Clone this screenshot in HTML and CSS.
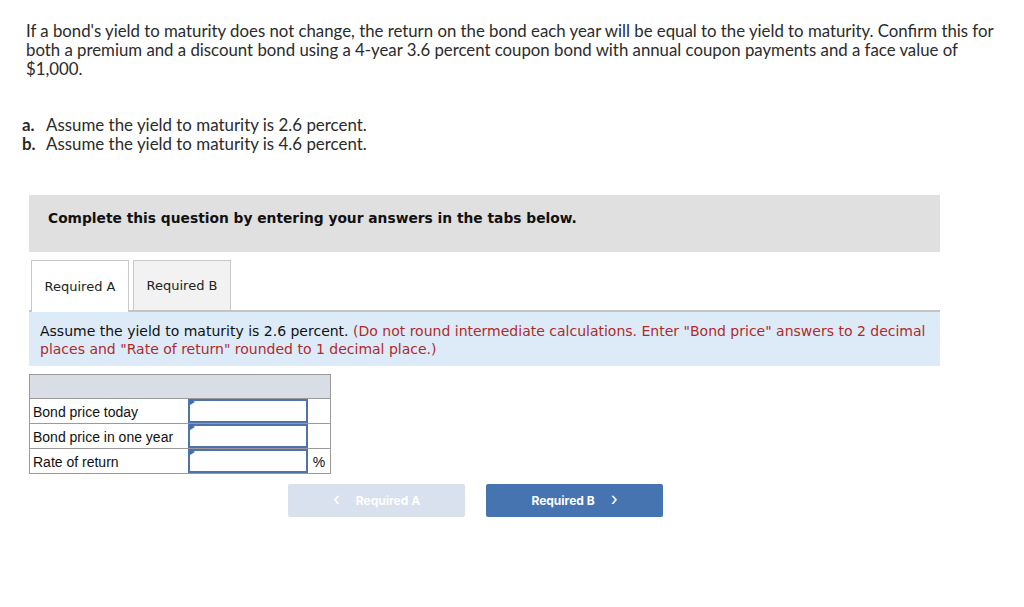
FILE: index.html
```html
<!DOCTYPE html>
<html>
<head>
<meta charset="utf-8">
<link rel="stylesheet" href="styles.css">
</head>
<body>
<div class="page">
  <p class="intro">If a bond's yield to maturity does not change, the return on the bond each year will be equal to the yield to maturity. Confirm this for both a premium and a discount bond using a 4-year 3.6 percent coupon bond with annual coupon payments and a face value of $1,000.</p>
  <ul class="parts">
    <li><span class="lbl">a.</span>Assume the yield to maturity is 2.6 percent.</li>
    <li><span class="lbl">b.</span>Assume the yield to maturity is 4.6 percent.</li>
  </ul>
  <div class="question">
    <div class="banner">Complete this question by entering your answers in the tabs below.</div>
    <div class="tabs">
      <div class="tab active">Required A</div>
      <div class="tab">Required B</div>
    </div>
    <div class="instr">Assume the yield to maturity is 2.6 percent. <span class="note">(Do not round intermediate calculations. Enter "Bond price" answers to 2 decimal places and "Rate of return" rounded to 1 decimal place.)</span></div>
    <table class="grid">
      <tr class="head"><td colspan="3"></td></tr>
      <tr><td class="c1">Bond price today</td><td class="c2"><div class="inp"></div></td><td class="c3"></td></tr>
      <tr><td class="c1">Bond price in one year</td><td class="c2"><div class="inp"></div></td><td class="c3"></td></tr>
      <tr><td class="c1">Rate of return</td><td class="c2"><div class="inp"></div></td><td class="c3">%</td></tr>
    </table>
    <div class="nav">
      <div class="btn prev"><span class="chev">&lsaquo;</span>Required A</div>
      <div class="btn next">Required B<span class="chev">&rsaquo;</span></div>
    </div>
  </div>
</div>
</body>
</html>
```
FILE: styles.css
```css
body {
  margin: 0;
  background: #fff;
  font-family: Lato, "Open Sans", sans-serif;
  color: #2b2b2b;
}
.page {
  padding: 21px 0 0 26px;
}
.intro {
  margin: 0;
  font-size: 16.8px;
  line-height: 19px;
  width: 992px;
}
.parts {
  list-style: none;
  margin: 37px 0 0 -4px;
  padding: 0;
  font-size: 16.9px;
  line-height: 19px;
}
.parts .lbl {
  font-weight: 700;
  display: inline-block;
  width: 24px;
}
.question {
  margin: 42px 0 0 3px;
  width: 911px;
}
.banner {
  height: 57px;
  box-sizing: border-box;
  background: #e0e0e0;
  padding: 14px 19px 0;
  font-family: "DejaVu Sans", Verdana, sans-serif;
  font-weight: 700;
  font-size: 13.8px;
  line-height: 18px;
  color: #111;
}
.tabs {
  display: flex;
  gap: 4px;
  margin-top: 8px;
  padding-left: 2px;
  border-bottom: 2px solid #c4c4c4;
  height: 50px;
}
.tab {
  width: 98px;
  height: 50px;
  box-sizing: border-box;
  border: 1px solid #c9c9c9;
  border-bottom: none;
  background: #f2f2f2;
  font-family: "DejaVu Sans", Verdana, sans-serif;
  font-size: 13px;
  color: #222;
  display: flex;
  align-items: center;
  justify-content: center;
}
.tab.active {
  background: #fff;
  height: 52px;
  margin-bottom: -2px;
  position: relative;
}
.instr {
  background: #ddebf8;
  padding: 10px 11px 8px;
  font-family: "DejaVu Sans", Verdana, sans-serif;
  font-size: 14px;
  line-height: 18px;
  color: #111;
}
.note {
  color: #b02a2a;
}
.grid {
  margin-top: 8px;
  border-collapse: collapse;
  font-family: "Liberation Sans", Arial, sans-serif;
  font-size: 14px;
  color: #111;
}
.grid td {
  border: 1px solid #9a9a9a;
  padding: 0;
  height: 24px;
}
.grid .head td {
  background: #d9dde6;
  height: 23px;
}
.grid .c1 {
  width: 155px;
  padding-left: 3px;
  padding-top: 1px;
  height: 23px;
}
.grid .c2 {
  width: 118px;
  padding: 0;
}
.grid .c3 {
  width: 22px;
  text-align: center;
  padding-top: 2px;
  height: 22px;
}
.inp {
  position: relative;
  height: 24px;
  box-sizing: border-box;
  border: 2px solid #4f72aa;
  background: #fff;
  margin: 0 -1px;
}
.inp::before {
  content: "";
  position: absolute;
  left: 0;
  top: 0;
  border-left: 5px solid #3e6fb7;
  border-top: 3px solid transparent;
  border-bottom: 3px solid transparent;
  margin-top: -2px;
}
.nav {
  display: flex;
  gap: 21px;
  margin: 10px 0 0 259px;
}
.btn {
  width: 177px;
  height: 33px;
  border-radius: 2px;
  display: flex;
  align-items: center;
  justify-content: center;
  font-family: Inter, "Open Sans", sans-serif;
  font-weight: 700;
  font-size: 12px;
  color: #fff;
}
.btn.prev {
  background: #d8e1ed;
}
.btn.next {
  background: #4674b1;
}
.chev {
  font-size: 18px;
  font-weight: 400;
  line-height: 1;
  margin-top: -3px;
}
.prev .chev {
  margin-right: 16px;
}
.next .chev {
  margin-left: 16px;
}
```
